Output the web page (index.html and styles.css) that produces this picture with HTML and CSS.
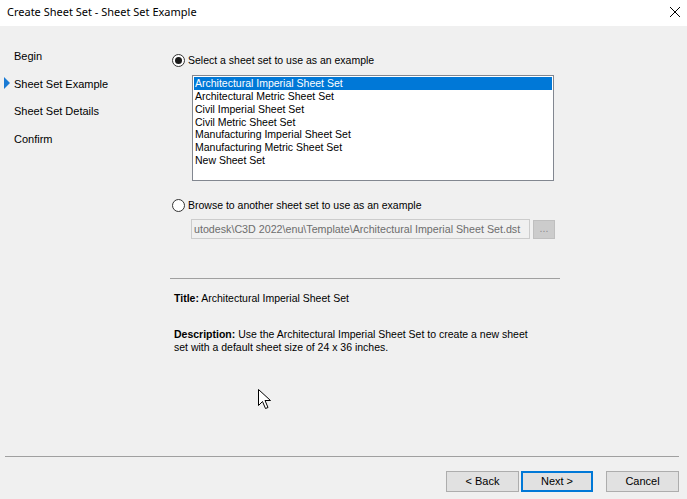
FILE: index.html
```html
<!DOCTYPE html>
<html>
<head>
<meta charset="utf-8">
<link rel="stylesheet" href="styles.css">
</head>
<body>
<div class="window">
  <div class="titlebar">
    <span class="title">Create Sheet Set - Sheet Set Example</span>
    <svg class="close" width="12" height="12" viewBox="0 0 12 12"><path d="M1 1 L11 11 M11 1 L1 11" stroke="#000" stroke-width="1"/></svg>
  </div>
  <div class="body">
    <div class="nav">
      <div class="nav-item">Begin</div>
      <div class="nav-item current"><span class="marker"></span>Sheet Set Example</div>
      <div class="nav-item">Sheet Set Details</div>
      <div class="nav-item">Confirm</div>
    </div>
    <div class="content">
      <div class="radio-row first">
        <span class="radio checked"><span class="dot"></span></span>
        <span>Select a sheet set to use as an example</span>
      </div>
      <div class="listbox">
        <div class="item selected">Architectural Imperial Sheet Set</div>
        <div class="item">Architectural Metric Sheet Set</div>
        <div class="item">Civil Imperial Sheet Set</div>
        <div class="item">Civil Metric Sheet Set</div>
        <div class="item">Manufacturing Imperial Sheet Set</div>
        <div class="item">Manufacturing Metric Sheet Set</div>
        <div class="item">New Sheet Set</div>
      </div>
      <div class="radio-row second">
        <span class="radio"></span>
        <span>Browse to another sheet set to use as an example</span>
      </div>
      <div class="browse">
        <div class="pathbox">utodesk\C3D 2022\enu\Template\Architectural Imperial Sheet Set.dst</div>
        <div class="dots">...</div>
      </div>
      <div class="sep"></div>
      <div class="info title-line"><b class="label">Title:</b><span> Architectural Imperial Sheet Set</span></div>
      <div class="info desc"><b class="label">Description:</b> Use the Architectural Imperial Sheet Set to create a new sheet set with a default sheet size of 24 x 36 inches.</div>
    </div>
  </div>
  <div class="footer">
    <div class="footer-sep"></div>
    <div class="buttons">
      <div class="btn">&lt; Back</div>
      <div class="btn default">Next &gt;</div>
      <div class="btn cancel">Cancel</div>
    </div>
  </div>
  <svg class="cursor" width="14" height="22" viewBox="0 0 14 22"><path d="M0.5 0.5 L0.5 16.5 L4.5 12.5 L7.5 19.5 L10 18.5 L7 11.5 L12.5 11.5 Z" fill="#fff" stroke="#000" stroke-width="1" stroke-linejoin="round"/></svg>
</div>
</body>
</html>
```
FILE: styles.css
```css
* { box-sizing: border-box; }
html, body { margin: 0; padding: 0; }
body {
  width: 687px; height: 499px; overflow: hidden;
  background: #f0f0f0;
  font-family: "Liberation Sans", Arial, sans-serif;
  font-size: 10.5px;
  color: #000;
}
.window { position: relative; width: 687px; height: 499px; display: flex; flex-direction: column; }
.titlebar {
  height: 26px; background: #fff; display: flex; align-items: center;
  justify-content: space-between; padding: 0 6px 3px 7px;
}
.title { font-family: "Noto Sans", "Liberation Sans", sans-serif; font-size: 11px; color: #000; }
.body { display: flex; height: 430px; }
.nav { width: 172px; padding-top: 23px; }
.nav-item { position: relative; height: 27.7px; line-height: 14px; padding-left: 14px; font-size: 11px; }
.marker {
  position: absolute; left: 4px; top: 0px; width: 0; height: 0;
  border-top: 6px solid transparent; border-bottom: 6px solid transparent; border-left: 6px solid #1a7ad4;
}
.content { width: 400px; }
.radio-row { display: flex; align-items: center; height: 14px; }
.radio-row.first { margin-top: 27px; }
.radio-row.second { margin-top: 17px; }
.radio {
  width: 13px; height: 13px; border: 1px solid #333; border-radius: 50%; background: #fff;
  margin-right: 3px; display: flex; align-items: center; justify-content: center;
}
.radio .dot { width: 7px; height: 7px; border-radius: 50%; background: #1a1a1a; }
.listbox {
  margin: 8px 0 0 20px; width: 362px; height: 106px; background: #fff;
  border: 1px solid #828790; padding: 1px 1px 0 1px;
}
.item { height: 12.85px; line-height: 13px; padding-left: 1px; white-space: nowrap; }
.item.selected { background: #0078d7; color: #fff; }
.browse { display: flex; margin: 7px 0 0 19px; }
.pathbox {
  width: 339px; height: 20px; border: 1px solid #cccccc; background: #f0f0f0;
  color: #6d6d6d; line-height: 18px; padding-left: 2px; white-space: nowrap; overflow: hidden;
  font-size: 10.7px;
}
.dots {
  width: 22px; height: 19px; margin: 1px 0 0 3px; background: #cccccc; border: 1px solid #bfbfbf;
  color: #8c8c8c; text-align: center; line-height: 15px;
}
.sep { margin: 39px 0 0 -2px; width: 390px; height: 1px; background: #a0a0a0; }
.info { padding-left: 2px; }
.title-line { margin-top: 13px; }
.desc { margin-top: 24px; width: 368px; line-height: 13px; }
.footer { flex: 1; }
.footer-sep { margin: 0 0 0 5px; width: 674px; height: 1px; background: #a0a0a0; }
.buttons { display: flex; margin: 14px 0 0 446px; }
.btn {
  width: 73px; height: 21px; background: #e1e1e1; border: 1px solid #adadad;
  text-align: center; line-height: 19px; font-size: 11px;
}
.btn.default { margin-left: 2px; width: 72px; border: 2px solid #0078d7; line-height: 17px; }
.btn.cancel { margin-left: 13px; }
.cursor { position: absolute; left: 258px; top: 389px; }
```
